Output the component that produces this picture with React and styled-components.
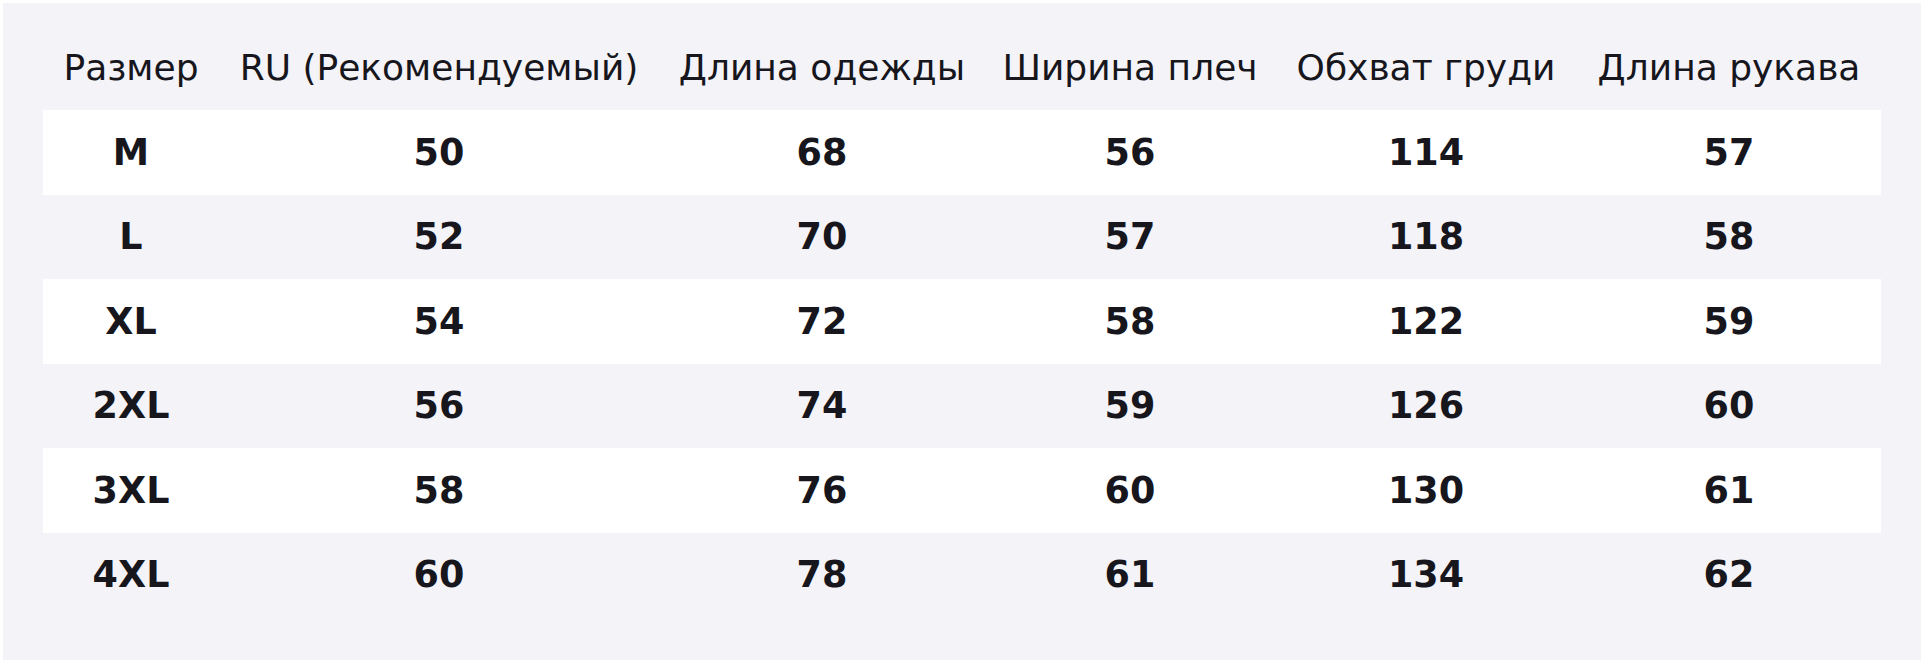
import React from "react";
import styled, { createGlobalStyle } from "styled-components";

const Global = createGlobalStyle`
  html, body { margin: 0; padding: 0; background: #ffffff; }
  body { padding: 3px; font-family: "DejaVu Sans", "Liberation Sans", sans-serif; }
`;

const Panel = styled.div`
  background: #f4f3f8;
  padding: 22px 40px 43px;
  width: 1918px;
  box-sizing: border-box;
`;

const COLS = "176px 440px 326px 290px 302px 1fr";

const Row = styled.div`
  display: grid;
  grid-template-columns: ${COLS};
  align-items: center;
  height: ${(p) => (p.$head ? "85px" : "84.5px")};
  background: ${(p) => (p.$white ? "#ffffff" : "transparent")};
`;

const HeadCell = styled.div`
  text-align: center;
  font-size: 36px;
  font-weight: 400;
  color: #16161c;
  white-space: nowrap;
`;

const Cell = styled.div`
  text-align: center;
  font-size: 36.5px;
  font-weight: 700;
  color: #16161c;
  white-space: nowrap;
`;

const headers = [
  "Размер",
  "RU (Рекомендуемый)",
  "Длина одежды",
  "Ширина плеч",
  "Обхват груди",
  "Длина рукава",
];

const rows = [
  ["M", "50", "68", "56", "114", "57"],
  ["L", "52", "70", "57", "118", "58"],
  ["XL", "54", "72", "58", "122", "59"],
  ["2XL", "56", "74", "59", "126", "60"],
  ["3XL", "58", "76", "60", "130", "61"],
  ["4XL", "60", "78", "61", "134", "62"],
];

export default function App() {
  return (
    <>
      <Global />
      <Panel>
        <Row $head>
          {headers.map((h) => (
            <HeadCell key={h}>{h}</HeadCell>
          ))}
        </Row>
        {rows.map((r, i) => (
          <Row key={r[0]} $white={i % 2 === 0}>
            {r.map((c, j) => (
              <Cell key={j}>{c}</Cell>
            ))}
          </Row>
        ))}
      </Panel>
    </>
  );
}
